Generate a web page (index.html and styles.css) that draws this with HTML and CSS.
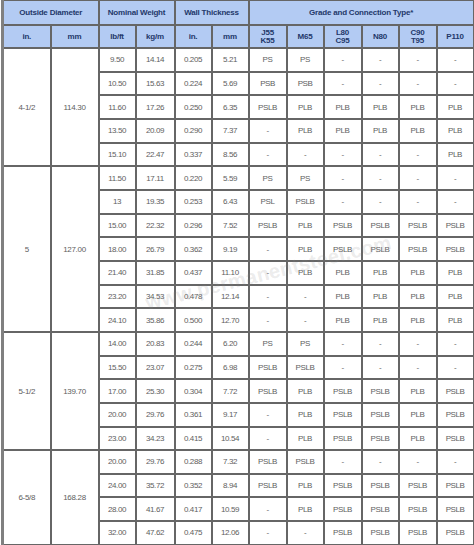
FILE: index.html
```html
<!DOCTYPE html>
<html>
<head>
<meta charset="utf-8">
<link rel="stylesheet" href="styles.css">
</head>
<body>
<div class="wrap">
<table class="grid">
<colgroup>
<col class="c48"><col class="c48"><col class="c37"><col class="c39"><col class="c37"><col class="c37"><col class="c38"><col class="c37"><col class="c38"><col class="c37"><col class="c38"><col class="c37">
</colgroup>
<thead>
<tr class="h1"><th colspan="2">Outside Diameter</th><th colspan="2">Nominal Weight</th><th colspan="2">Wall Thickness</th><th colspan="6">Grade and Connection Type*</th></tr>
<tr class="h2"><th>in.</th><th>mm</th><th>lb/ft</th><th>kg/m</th><th>in.</th><th>mm</th><th>J55<br>K55</th><th>M65</th><th>L80<br>C95</th><th>N80</th><th>C90<br>T95</th><th>P110</th></tr>
</thead>
<tbody>
<tr><td rowspan="5">4-1/2</td><td rowspan="5">114.30</td><td>9.50</td><td>14.14</td><td>0.205</td><td>5.21</td><td>PS</td><td>PS</td><td>-</td><td>-</td><td>-</td><td>-</td></tr>
<tr><td>10.50</td><td>15.63</td><td>0.224</td><td>5.69</td><td>PSB</td><td>PSB</td><td>-</td><td>-</td><td>-</td><td>-</td></tr>
<tr><td>11.60</td><td>17.26</td><td>0.250</td><td>6.35</td><td>PSLB</td><td>PLB</td><td>PLB</td><td>PLB</td><td>PLB</td><td>PLB</td></tr>
<tr><td>13.50</td><td>20.09</td><td>0.290</td><td>7.37</td><td>-</td><td>PLB</td><td>PLB</td><td>PLB</td><td>PLB</td><td>PLB</td></tr>
<tr><td>15.10</td><td>22.47</td><td>0.337</td><td>8.56</td><td>-</td><td>-</td><td>-</td><td>-</td><td>-</td><td>PLB</td></tr>

<tr><td rowspan="7">5</td><td rowspan="7">127.00</td><td>11.50</td><td>17.11</td><td>0.220</td><td>5.59</td><td>PS</td><td>PS</td><td>-</td><td>-</td><td>-</td><td>-</td></tr>
<tr><td>13</td><td>19.35</td><td>0.253</td><td>6.43</td><td>PSL</td><td>PSLB</td><td>-</td><td>-</td><td>-</td><td>-</td></tr>
<tr><td>15.00</td><td>22.32</td><td>0.296</td><td>7.52</td><td>PSLB</td><td>PLB</td><td>PSLB</td><td>PSLB</td><td>PSLB</td><td>PSLB</td></tr>
<tr><td>18.00</td><td>26.79</td><td>0.362</td><td>9.19</td><td>-</td><td>PLB</td><td>PSLB</td><td>PSLB</td><td>PSLB</td><td>PSLB</td></tr>
<tr><td>21.40</td><td>31.85</td><td>0.437</td><td>11.10</td><td>-</td><td>PLB</td><td>PLB</td><td>PLB</td><td>PLB</td><td>PLB</td></tr>
<tr><td>23.20</td><td>34.53</td><td>0.478</td><td>12.14</td><td>-</td><td>-</td><td>PLB</td><td>PLB</td><td>PLB</td><td>PLB</td></tr>
<tr><td>24.10</td><td>35.86</td><td>0.500</td><td>12.70</td><td>-</td><td>-</td><td>PLB</td><td>PLB</td><td>PLB</td><td>PLB</td></tr>

<tr><td rowspan="5">5-1/2</td><td rowspan="5">139.70</td><td>14.00</td><td>20.83</td><td>0.244</td><td>6.20</td><td>PS</td><td>PS</td><td>-</td><td>-</td><td>-</td><td>-</td></tr>
<tr><td>15.50</td><td>23.07</td><td>0.275</td><td>6.98</td><td>PSLB</td><td>PSLB</td><td>-</td><td>-</td><td>-</td><td>-</td></tr>
<tr><td>17.00</td><td>25.30</td><td>0.304</td><td>7.72</td><td>PSLB</td><td>PLB</td><td>PSLB</td><td>PSLB</td><td>PLB</td><td>PSLB</td></tr>
<tr><td>20.00</td><td>29.76</td><td>0.361</td><td>9.17</td><td>-</td><td>PLB</td><td>PSLB</td><td>PSLB</td><td>PLB</td><td>PSLB</td></tr>
<tr><td>23.00</td><td>34.23</td><td>0.415</td><td>10.54</td><td>-</td><td>PLB</td><td>PSLB</td><td>PSLB</td><td>PLB</td><td>PSLB</td></tr>

<tr><td rowspan="4">6-5/8</td><td rowspan="4">168.28</td><td>20.00</td><td>29.76</td><td>0.288</td><td>7.32</td><td>PSLB</td><td>PSLB</td><td>-</td><td>-</td><td>-</td><td>-</td></tr>
<tr><td>24.00</td><td>35.72</td><td>0.352</td><td>8.94</td><td>PSLB</td><td>PLB</td><td>PSLB</td><td>PSLB</td><td>PSLB</td><td>PSLB</td></tr>
<tr><td>28.00</td><td>41.67</td><td>0.417</td><td>10.59</td><td>-</td><td>PLB</td><td>PSLB</td><td>PSLB</td><td>PSLB</td><td>PSLB</td></tr>
<tr><td>32.00</td><td>47.62</td><td>0.475</td><td>12.06</td><td>-</td><td>-</td><td>PSLB</td><td>PSLB</td><td>PSLB</td><td>PSLB</td></tr>
</tbody>
</table>
<div class="watermark">www.permanentsteel.com</div>
</div>
</body>
</html>
```
FILE: styles.css
```css
html, body {
  margin: 0;
  padding: 0;
  background: #ffffff;
}

.wrap {
  position: relative;
  width: 474px;
  height: 545px;
  overflow: hidden;
}

.grid {
  border-collapse: collapse;
  table-layout: fixed;
  width: 472px;
  margin: -1px 0 0 1px;
  font-family: "Liberation Sans", Arial, sans-serif;
  font-size: 8px;
  border-left: 3px solid #808080;
}

.c48 { width: 48px; }
.c37 { width: 37px; }
.c38 { width: 38px; }
.c39 { width: 39px; }

.grid th,
.grid td {
  border: 2px solid #666666;
  text-align: center;
  vertical-align: middle;
  padding: 0;
  overflow: hidden;
  white-space: nowrap;
}

.grid th {
  background: #b3cbf3;
  color: #23386a;
  font-weight: bold;
  letter-spacing: -0.2px;
  line-height: 8px;
}

.grid td {
  color: #5e5e5e;
  letter-spacing: -0.4px;
  background: #ffffff;
}

.h1 { height: 25px; }
.h2 { height: 23px; }
.grid tbody tr { height: 23.67px; }

.grid tbody td[rowspan] {
  letter-spacing: -0.3px;
}

.watermark {
  position: absolute;
  left: 146px;
  top: 292px;
  transform: rotate(-14deg);
  transform-origin: left center;
  font-family: "Liberation Sans", Arial, sans-serif;
  font-size: 20px;
  font-weight: bold;
  letter-spacing: 0.3px;
  color: rgba(140, 140, 140, 0.18);
  white-space: nowrap;
  pointer-events: none;
}
```
